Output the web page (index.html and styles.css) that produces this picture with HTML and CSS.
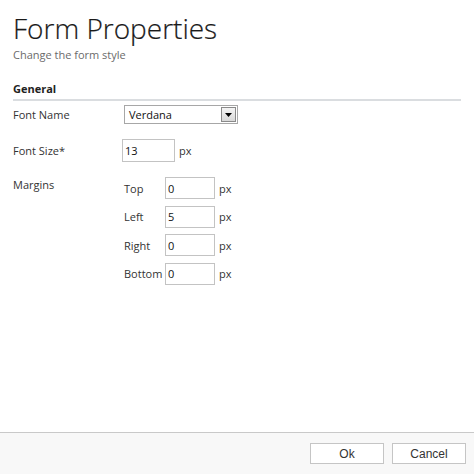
FILE: index.html
```html
<!DOCTYPE html>
<html>
<head>
<meta charset="utf-8">
<link rel="stylesheet" href="styles.css">
</head>
<body>
<div class="page">
  <main class="main">
    <header class="head">
      <h1 class="title">Form Properties</h1>
      <p class="subtitle">Change the form style</p>
    </header>
    <section class="group">
      <h2 class="group-title">General</h2>
      <div class="row row-font">
        <span class="label">Font Name</span>
        <div class="select">
          <span class="select-text">Verdana</span>
          <span class="select-btn">
            <svg width="7" height="4" viewBox="0 0 7 4"><path d="M0 0h7L3.5 4z" fill="#000"/></svg>
          </span>
        </div>
      </div>
      <div class="row row-size">
        <span class="label">Font Size*</span>
        <span class="input input-size">13</span>
        <span class="unit">px</span>
      </div>
      <div class="row row-margins">
        <span class="label">Margins</span>
        <div class="mgrid">
          <span class="mlabel">Top</span><span class="input minput">0</span><span class="unit">px</span>
          <span class="mlabel">Left</span><span class="input minput">5</span><span class="unit">px</span>
          <span class="mlabel">Right</span><span class="input minput">0</span><span class="unit">px</span>
          <span class="mlabel">Bottom</span><span class="input minput">0</span><span class="unit">px</span>
        </div>
      </div>
    </section>
  </main>
  <footer class="foot">
    <button class="btn">Ok</button>
    <button class="btn">Cancel</button>
  </footer>
</div>
</body>
</html>
```
FILE: styles.css
```css
html, body {
  margin: 0;
  padding: 0;
  background: #fff;
}
body {
  font-family: "Open Sans", "Noto Sans", sans-serif;
  color: #333;
  font-size: 11px;
}
.page {
  height: 474px;
  display: flex;
  flex-direction: column;
}
.main {
  flex: 1;
  padding: 0 13px;
}
.head {
  padding-top: 10px;
}
.title {
  margin: 0;
  font-weight: 300;
  font-size: 28px;
  line-height: 37px;
  color: #1a1a1a;
  -webkit-text-stroke: 0.2px #1a1a1a;
}
.subtitle {
  margin: 0;
  font-size: 11px;
  line-height: 16px;
  color: #6b6b6b;
}
.group {
  margin-top: 18px;
}
.group-title {
  margin: 0;
  font-size: 11px;
  font-weight: 700;
  color: #222;
  line-height: 15px;
  padding-bottom: 3px;
  border-bottom: 2px solid #dadde0;
}
.row {
  display: flex;
  align-items: center;
}
.label {
  width: 109px;
  flex: none;
  color: #333;
}
.row-font {
  margin-top: 4px;
}
.select {
  margin-left: 2px;
  width: 112px;
  height: 17px;
  border: 1px solid #a7a7a7;
  display: flex;
  align-items: center;
  justify-content: space-between;
  background: #fff;
}
.select-text {
  padding-left: 4px;
  color: #111;
}
.select-btn {
  width: 13px;
  height: 13px;
  margin-right: 1px;
  border: 1px solid #8a8a8a;
  background: linear-gradient(#f4f4f4, #d8d8d8);
  display: flex;
  align-items: center;
  justify-content: center;
}
.row-size {
  margin-top: 15px;
}
.input {
  box-sizing: border-box;
  border: 1px solid #c3c3c3;
  background: #fff;
  color: #111;
  display: flex;
  align-items: center;
  padding-left: 2px;
}
.input-size {
  width: 53px;
  height: 23px;
}
.unit {
  margin-left: 4px;
  color: #333;
}
.row-margins {
  margin-top: 15px;
  align-items: flex-start;
}
.row-margins .label {
  line-height: 15px;
}
.mgrid {
  margin-left: 2px;
  margin-top: 0;
  display: grid;
  grid-template-columns: 41px 50px auto;
  row-gap: 6.5px;
  align-items: center;
}
.mlabel {
  color: #333;
}
.minput {
  height: 22px;
}
.foot {
  height: 42px;
  box-sizing: border-box;
  border-top: 1px solid #c9c9c9;
  background: #f8f8f8;
  display: flex;
  justify-content: flex-end;
  align-items: center;
  gap: 8px;
  padding: 0 8px 0 0;
}
.btn {
  width: 74px;
  height: 21px;
  border: 1px solid #c5c5c5;
  background: #fff;
  font-family: "Liberation Sans", Arial, sans-serif;
  font-size: 12px;
  color: #333;
  padding: 0;
}
```
